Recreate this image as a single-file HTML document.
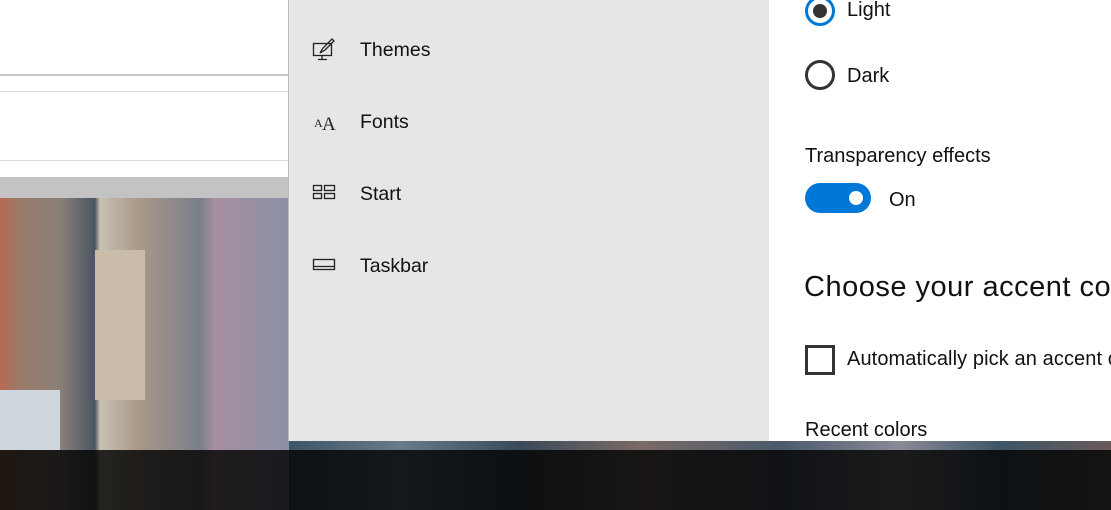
<!DOCTYPE html>
<html><head><style>
*{margin:0;padding:0;box-sizing:border-box}
body{width:1111px;height:510px;overflow:hidden;position:relative;font-family:"Liberation Sans",sans-serif;color:#111;background:#3e5366}
.abs{position:absolute}
.city{left:0;top:198px;width:1111px;height:312px;background:
linear-gradient(90deg,#b86a50 0,#9a7a6a 20px,#8a8078 60px,#4b5563 95px,#c8c0b0 100px,#a89888 140px,#7a7f8a 200px,#a890a0 215px,#8a90a8 289px,#3d5567 289px,#6a7a86 400px,#3a4a58 520px,#7a6a66 640px,#4a5a6a 780px,#8a8a96 900px,#3d5567 1000px,#6a5a5a 1111px)}
.nav{font-size:19.5px;color:#111}
.nav div{position:absolute;left:360px}
</style></head><body>
<div class="abs city"></div>
<div class="abs" style="left:0;top:390px;width:60px;height:60px;background:#cfd6de"></div>
<div class="abs" style="left:95px;top:250px;width:50px;height:150px;background:#c9bca8"></div>
<div class="abs" style="left:0;top:0;width:289px;height:178px;background:#fff"></div>
<div class="abs" style="left:0;top:74px;width:289px;height:2px;background:#c4c4c4"></div>
<div class="abs" style="left:0;top:91px;width:289px;height:1px;background:#ddd"></div>
<div class="abs" style="left:0;top:160px;width:289px;height:1px;background:#ddd"></div>
<div class="abs" style="left:0;top:177px;width:289px;height:21px;background:#c3c3c3"></div>
<div class="abs" style="left:288px;top:0;width:481px;height:441px;background:#e6e6e6;border-left:1px solid #bbb"></div>
<div class="abs" style="left:769px;top:0;width:342px;height:441px;background:#fff"></div>
<div class="abs" style="left:0;top:450px;width:1111px;height:60px;background:rgba(5,5,5,0.84)"></div>
<svg class="abs" style="left:312px;top:38px" width="26" height="250" fill="none" stroke="#222" stroke-width="1.3">
<rect x="1.5" y="5.5" width="18" height="12"/><path d="M10 18v3M6 21.5h9M8 15l3-5 9-9 2 2-9 9z"/>
<text x="2" y="89" font-size="12" fill="#222" stroke="none" font-family="Liberation Serif">A</text><text x="10" y="92" font-size="19" fill="#222" stroke="none" font-family="Liberation Serif">A</text>
<rect x="1.5" y="147.5" width="8" height="5"/><rect x="12.5" y="147.5" width="10" height="5"/><rect x="1.5" y="155.5" width="8" height="5"/><rect x="12.5" y="155.5" width="10" height="5"/>
<rect x="1.5" y="221.5" width="21" height="10"/><path d="M1.5 228.5h21"/>
</svg>
<div class="nav">
<div style="top:39px">Themes</div>
<div style="top:111px">Fonts</div>
<div style="top:183px">Start</div>
<div style="top:255px">Taskbar</div>
</div>
<div class="abs" style="left:805px;top:-4px;width:30px;height:30px;border:3px solid #0078d7;border-radius:50%"></div>
<div class="abs" style="left:813px;top:4px;width:14px;height:14px;background:#333;border-radius:50%"></div>
<div class="abs" style="left:847px;top:-1px;font-size:20px">Light</div>
<div class="abs" style="left:805px;top:60px;width:30px;height:30px;border:3px solid #333;border-radius:50%"></div>
<div class="abs" style="left:847px;top:65px;font-size:20px">Dark</div>
<div class="abs" style="left:805px;top:145px;font-size:20px">Transparency effects</div>
<div class="abs" style="left:805px;top:183px;width:66px;height:30px;background:#0078d7;border-radius:15px"></div>
<div class="abs" style="left:849px;top:191px;width:14px;height:14px;background:#fff;border-radius:50%"></div>
<div class="abs" style="left:889px;top:189px;font-size:20px">On</div>
<div class="abs" style="left:804px;top:271px;font-size:29px;letter-spacing:0.5px;white-space:nowrap">Choose your accent color</div>
<div class="abs" style="left:805px;top:345px;width:30px;height:30px;border:3px solid #333"></div>
<div class="abs" style="left:847px;top:348px;font-size:20px;letter-spacing:0.1px;white-space:nowrap">Automatically pick an accent color</div>
<div class="abs" style="left:805px;top:419px;font-size:20px;height:22px;overflow:hidden">Recent colors</div>
</body></html>
